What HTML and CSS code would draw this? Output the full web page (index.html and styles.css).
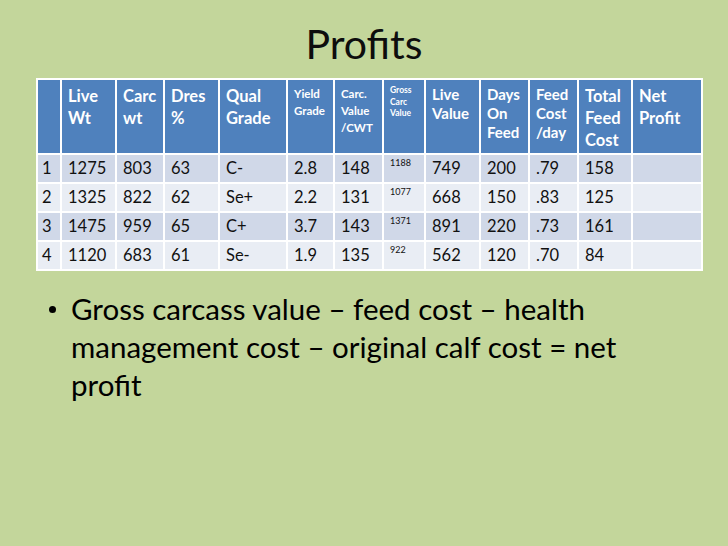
FILE: index.html
```html
<!DOCTYPE html>
<html>
<head>
<meta charset="utf-8">
<link rel="stylesheet" href="styles.css">
</head>
<body>
<div class="slide">
  <h1 class="title">Profits</h1>
  <table class="data">
    <colgroup>
      <col style="width:24px"><col style="width:55px"><col style="width:48px"><col style="width:55px"><col style="width:68px"><col style="width:47px"><col style="width:49px"><col style="width:42px"><col style="width:55px"><col style="width:49px"><col style="width:49px"><col style="width:54px"><col style="width:70px">
    </colgroup>
    <thead>
      <tr>
        <th></th>
        <th class="h-lg">Live<br>Wt</th>
        <th class="h-lg">Carc<br>wt</th>
        <th class="h-lg">Dres<br>%</th>
        <th class="h-lg">Qual<br>Grade</th>
        <th class="h-sm">Yield<br>Grade</th>
        <th class="h-sm">Carc.<br>Value<br>/CWT</th>
        <th class="h-xs">Gross<br>Carc<br>Value</th>
        <th class="h-md">Live<br>Value</th>
        <th class="h-md">Days<br>On<br>Feed</th>
        <th class="h-md">Feed<br>Cost<br>/day</th>
        <th class="h-lg">Total<br>Feed<br>Cost</th>
        <th class="h-lg">Net<br>Profit</th>
      </tr>
    </thead>
    <tbody>
      <tr><td class="num">1</td><td>1275</td><td>803</td><td>63</td><td>C-</td><td>2.8</td><td>148</td><td class="tiny">1188</td><td>749</td><td>200</td><td>.79</td><td>158</td><td></td></tr>
      <tr><td class="num">2</td><td>1325</td><td>822</td><td>62</td><td>Se+</td><td>2.2</td><td>131</td><td class="tiny">1077</td><td>668</td><td>150</td><td>.83</td><td>125</td><td></td></tr>
      <tr><td class="num">3</td><td>1475</td><td>959</td><td>65</td><td>C+</td><td>3.7</td><td>143</td><td class="tiny">1371</td><td>891</td><td>220</td><td>.73</td><td>161</td><td></td></tr>
      <tr><td class="num">4</td><td>1120</td><td>683</td><td>61</td><td>Se-</td><td>1.9</td><td>135</td><td class="tiny">922</td><td>562</td><td>120</td><td>.70</td><td>84</td><td></td></tr>
    </tbody>
  </table>
  <ul class="bullets">
    <li>Gross carcass value – feed cost – health management cost – original calf cost = net profit</li>
  </ul>
</div>
</body>
</html>
```

FILE: styles.css
```css
html, body {
  margin: 0;
  padding: 0;
}
body {
  width: 728px;
  height: 546px;
  background: #c3d69b;
  font-family: "Lato", "Open Sans", sans-serif;
  color: #000;
  overflow: hidden;
}
.slide {
  padding-top: 20px;
}
.title {
  margin: 0;
  height: 58px;
  font-size: 41px;
  font-weight: 400;
  line-height: 48px;
  text-align: center;
  color: #0d0d0d;
}
.data {
  margin-left: 36px;
  width: 665px;
  table-layout: fixed;
  border-collapse: collapse;
  border: 2px solid #fff;
}
.data th, .data td {
  border: 2px solid #fff;
  text-align: left;
  vertical-align: top;
  padding: 0 2px 0 6px;
  white-space: nowrap;
  overflow: hidden;
}
.data th {
  background: #4f81bd;
  color: #fff;
  font-weight: 700;
  height: 68px;
  padding-top: 5px;
  padding-bottom: 0;
}
.h-lg { font-size: 16.5px; line-height: 22px; }
.h-md { font-size: 15px; line-height: 19px; padding-top: 6px; }
.h-sm { font-size: 11.5px; line-height: 17px; padding-top: 3px; }
.h-xs { font-size: 8.5px; line-height: 11.5px; padding-top: 3px; }
.data td {
  font-size: 16.5px;
  line-height: 27px;
  height: 27px;
  color: #111;
  padding-top: 0;
}
.data tbody tr:nth-child(odd) td { background: #d0d8e8; }
.data tbody tr:nth-child(even) td { background: #e9edf4; }
.data td.num { padding-left: 4px; }
.data td.tiny {
  font-size: 9px;
  line-height: 16px;
}
.bullets {
  list-style: none;
  margin: 19px 0 0 0;
  padding: 0 60px 0 71px;
}
.bullets li {
  position: relative;
  font-size: 29.5px;
  line-height: 38px;
}
.bullets li::before {
  content: "";
  position: absolute;
  left: -22px;
  top: 16px;
  width: 7px;
  height: 7px;
  border-radius: 50%;
  background: #000;
}
```
